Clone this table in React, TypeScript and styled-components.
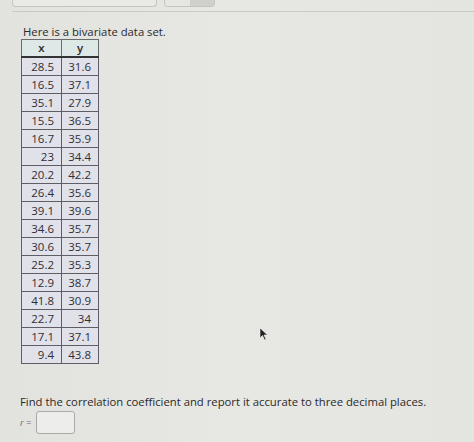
import styled, { createGlobalStyle } from "styled-components";

const GlobalStyle = createGlobalStyle`
  html, body {
    margin: 0;
    padding: 0;
    background: #e5e5e2;
  }
  body {
    font-family: "Open Sans", "Noto Sans", sans-serif;
    color: #2a2a2a;
  }
`;

const rows: [string, string][] = [
  ["28.5", "31.6"],
  ["16.5", "37.1"],
  ["35.1", "27.9"],
  ["15.5", "36.5"],
  ["16.7", "35.9"],
  ["23", "34.4"],
  ["20.2", "42.2"],
  ["26.4", "35.6"],
  ["39.1", "39.6"],
  ["34.6", "35.7"],
  ["30.6", "35.7"],
  ["25.2", "35.3"],
  ["12.9", "38.7"],
  ["41.8", "30.9"],
  ["22.7", "34"],
  ["17.1", "37.1"],
  ["9.4", "43.8"],
];

const Page = styled.div`
  position: relative;
  width: 474px;
  height: 442px;
  overflow: hidden;
  background: linear-gradient(90deg, #e2e2df 0%, #e7e7e4 50%, #e4e4e1 100%);
`;

/*----------------------------------
	Top strip
----------------------------------*/
const TopBar = styled.div`
  display: flex;
  gap: 7px;
  margin-left: 12px;
  height: 11px;
  border-bottom: 1px solid #c9c9c6;
  align-items: flex-start;
`;

const TopBox = styled.div<{ $w: number }>`
  width: ${(p) => p.$w}px;
  height: 8px;
  margin-top: -2px;
  border: 1px solid #c4c4c1;
  border-top: none;
  border-radius: 0 0 4px 4px;
  background: #e9e9e6;
`;

const TopButton = styled.div`
  display: flex;
  width: 49px;
  height: 8px;
  margin-top: -2px;
  border: 1px solid #c4c4c1;
  border-top: none;
  border-radius: 0 0 4px 4px;
  overflow: hidden;
`;

const ButtonHalf = styled.div<{ $dark?: boolean }>`
  flex: 1;
  background: ${(p) => (p.$dark ? "#cfcfcc" : "#e6e6e3")};
`;

/*----------------------------------
	Content
----------------------------------*/
const Content = styled.div`
  padding: 12px 0 0 21px;
`;

const Intro = styled.div`
  font-size: 11.3px;
  line-height: 15px;
  margin-left: 2px;
`;

const Table = styled.table`
  border-collapse: collapse;
  table-layout: fixed;
  width: 77px;
  font-size: 11.5px;
`;

const Col = styled.col<{ $w: number }>`
  width: ${(p) => p.$w}px;
`;

const HeadCell = styled.th`
  height: 16px;
  padding: 0;
  font-weight: 600;
  font-size: 11.5px;
  line-height: 16px;
  text-align: center;
  background: #dde8e7;
  border: 1px solid #6a6a6a;
  border-bottom: 2px solid #333;
`;

const Cell = styled.td`
  height: 17px;
  padding: 0 7px 0 0;
  line-height: 17px;
  text-align: right;
  background: #e1e1ea;
  border: 1px solid #5e5e66;
  color: #2f2f35;
`;

const Question = styled.div`
  margin: 30px 0 0 -1px;
  font-size: 11.3px;
  line-height: 15px;
`;

const AnswerRow = styled.div`
  display: flex;
  align-items: center;
  gap: 5px;
  margin-top: 2px;
  margin-left: -1px;
`;

const Label = styled.span`
  font-size: 9px;
  font-style: italic;
  color: #6a6a6a;
`;

const AnswerBox = styled.div`
  width: 37px;
  height: 21px;
  background: #ededeb;
  border: 1px solid #a9a9a7;
  border-radius: 3px;
`;

const Cursor = styled.svg`
  position: absolute;
  left: 259px;
  top: 327px;
`;

const App = () => {
  return (
    <Page>
      <GlobalStyle />
      <TopBar>
        <TopBox $w={143} />
        <TopButton>
          <ButtonHalf />
          <ButtonHalf $dark />
        </TopButton>
      </TopBar>
      <Content>
        <Intro>Here is a bivariate data set.</Intro>
        <Table>
          <colgroup>
            <Col $w={40} />
            <Col $w={37} />
          </colgroup>
          <thead>
            <tr>
              <HeadCell>x</HeadCell>
              <HeadCell>y</HeadCell>
            </tr>
          </thead>
          <tbody>
            {rows.map(([x, y], i) => (
              <tr key={i}>
                <Cell>{x}</Cell>
                <Cell>{y}</Cell>
              </tr>
            ))}
          </tbody>
        </Table>
        <Question>
          Find the correlation coefficient and report it accurate to three decimal places.
        </Question>
        <AnswerRow>
          <Label>r =</Label>
          <AnswerBox />
        </AnswerRow>
      </Content>
      <Cursor width="10" height="14" viewBox="0 0 10 14">
        <path d="M1 1 L1 11 L3.5 8.5 L5.5 13 L7 12.3 L5 8 L8.5 8 Z" fill="#222" stroke="#f4f4f4" strokeWidth="0.6" />
      </Cursor>
    </Page>
  );
};

export default App;
